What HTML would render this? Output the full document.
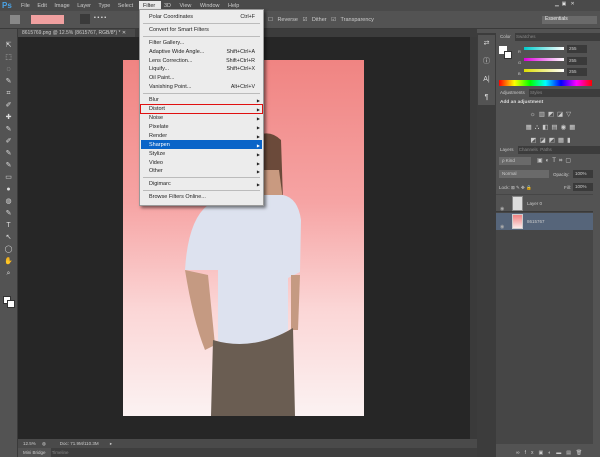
<!DOCTYPE html>
<html><head><style>
*{margin:0;padding:0;box-sizing:border-box}
body{width:600px;height:457px;background:#535353;position:relative;overflow:hidden;font-family:"Liberation Sans",sans-serif;font-size:5.5px;color:#ccc}
.a{position:absolute}
.mi{position:absolute;left:9px;color:#222;font-size:5.5px}
.sc{position:absolute;right:8px;color:#222;font-size:5.3px}
.ar{position:absolute;right:3px;color:#222;font-size:4px}
.sep{position:absolute;left:3px;right:3px;height:1px;background:#bbb}
</style></head><body>
<!-- menu bar -->
<div class="a" style="left:0;top:0;width:600px;height:11px;background:#4a4a4a"></div>
<div class="a" style="left:2px;top:1px;color:#4aa3e6;font-weight:bold;font-size:8px">Ps</div>
<div class="a" style="left:21px;top:3px;word-spacing:6px;color:#ccc">File Edit Image Layer Type Select</div>
<div class="a" style="left:139px;top:1px;width:22px;height:10px;background:#e8e8e8"></div>
<div class="a" style="left:143px;top:3px;color:#222">Filter</div>
<div class="a" style="left:164px;top:3px;word-spacing:7px">3D View Window Help</div>
<div class="a" style="left:555px;top:1px;width:40px;height:7px;color:#ddd;font-size:5px">▁ &nbsp;▣ &nbsp; ✕</div>
<!-- options bar -->
<div class="a" style="left:0;top:11px;width:600px;height:18px;background:#535353;border-bottom:1px solid #3a3a3a"></div>
<div class="a" style="left:10px;top:15px;width:10px;height:9px;background:#888"></div>
<div class="a" style="left:31px;top:15px;width:33px;height:9px;background:#f0a0a0"></div>
<div class="a" style="left:80px;top:14px;width:10px;height:10px;background:#3a3a3a"></div>
<div class="a" style="left:94px;top:15px;width:40px;height:8px;color:#ddd">▪ ▪ ▪ ▪</div>
<div class="a" style="left:268px;top:17px;word-spacing:3px">☐ Reverse ☑ Dither ☑ Transparency</div>
<div class="a" style="left:542px;top:16px;width:55px;height:8px;background:#6a6a6a;color:#eee;padding-left:3px;font-size:5px">Essentials</div>
<!-- tab bar -->
<div class="a" style="left:18px;top:29px;width:459px;height:8px;background:#3c3c3c"></div>
<div class="a" style="left:18px;top:29px;width:117px;height:8px;background:#4a4a4a;padding-left:4px;font-size:5px;line-height:8px">8615769.png @ 12.5% (8615767, RGB/8*) * ✕</div>
<!-- left toolbar -->
<div class="a" style="left:0;top:29px;width:18px;height:428px;background:#535353;border-right:1px solid #3a3a3a"></div>
<div class="a" style="left:3px;top:40px;width:11px;color:#ddd;font-size:7px;line-height:12px;text-align:center">⇱<br>⬚<br>◌<br>✎<br>⌗<br>✐<br>✚<br>✎<br>✐<br>✎<br>✎<br>▭<br>●<br>◍<br>✎<br>T<br>↖<br>◯<br>✋<br>⌕</div>
<div class="a" style="left:3px;top:296px;width:8px;height:8px;background:#fff;border:1px solid #333"></div>
<div class="a" style="left:7px;top:300px;width:8px;height:8px;background:#fff;border:1px solid #333"></div>
<!-- canvas area -->
<div class="a" style="left:18px;top:37px;width:452px;height:402px;background:#262626"></div>
<div class="a" style="left:470px;top:37px;width:7px;height:402px;background:#3a3a3a"></div>
<div class="a" style="left:123px;top:60px;width:241px;height:356px;background:linear-gradient(#f08482,#f6a4a4 40%,#fbd6d6 70%,#fbf2f2)"></div>
<svg class="a" style="left:123px;top:60px" width="241" height="356">
<path d="M135 75 Q148 70 158 80 L160 140 L137 140 Z" fill="#6b4a3a"/>
<path d="M128 110 L156 110 L160 140 L128 140Z" fill="#c99a80"/>
<path d="M85 145 Q100 132 125 135 L160 135 Q175 138 178 160 L177 212 L165 218 L165 270 Q140 290 95 282 L95 210 L62 210 Q65 160 85 145Z" fill="#dde2ef"/>
<path d="M62 210 L85 215 L92 285 L82 290 Q70 260 62 210Z" fill="#c59a82"/>
<path d="M168 215 L177 215 L175 270 L168 270Z" fill="#c59a82"/>
<path d="M90 280 Q130 292 170 268 L172 356 L88 356 Z" fill="#6a5d52"/>
</svg>
<!-- status bar -->
<div class="a" style="left:18px;top:439px;width:459px;height:9px;background:#4a4a4a;font-size:4.5px;line-height:9px;padding-left:5px">12.5% &nbsp; &nbsp; ◍ &nbsp; &nbsp; &nbsp; &nbsp; &nbsp; Doc: 71.9M/110.3M &nbsp; &nbsp; &nbsp; &nbsp; ▸</div>
<div class="a" style="left:18px;top:448px;width:459px;height:9px;background:#3e3e3e;font-size:4.5px;line-height:9px"><span style="background:#535353;padding:0 5px;display:inline-block">Mini Bridge</span> <span style="color:#888">Timeline</span></div>
<!-- dock -->
<div class="a" style="left:477px;top:33px;width:19px;height:424px;background:#3c3c3c"></div>
<div class="a" style="left:478px;top:35px;width:17px;height:70px;background:#535353;color:#ddd;font-size:7px;line-height:18px;text-align:center">⇄<br>ⓘ<br>A|<br>¶</div>
<!-- panels -->
<div class="a" style="left:496px;top:33px;width:104px;height:424px;background:#535353"></div>
<div class="a" style="left:496px;top:33px;width:104px;height:8px;background:#3c3c3c;font-size:4.5px;line-height:8px"><span style="background:#535353;padding:0 4px;display:inline-block">Color</span> <span style="color:#888">Swatches</span></div>
<div class="a" style="left:499px;top:46px;width:8px;height:8px;background:#fff"></div>
<div class="a" style="left:504px;top:51px;width:8px;height:8px;background:#fff;border:1px solid #333"></div>
<div class="a" style="left:518px;top:46px;font-size:4px;line-height:11px">R<br>G<br>B</div>
<div class="a" style="left:524px;top:47px;width:40px;height:3px;background:linear-gradient(90deg,#0cc,#fff)"></div>
<div class="a" style="left:524px;top:58px;width:40px;height:3px;background:linear-gradient(90deg,#d0d,#fff)"></div>
<div class="a" style="left:524px;top:69px;width:40px;height:3px;background:linear-gradient(90deg,#dd0,#fff)"></div>
<div class="a" style="left:567px;top:45px;width:20px;height:8px;background:#3a3a3a;font-size:4.5px;line-height:8px;padding-left:2px">255</div>
<div class="a" style="left:567px;top:57px;width:20px;height:8px;background:#3a3a3a;font-size:4.5px;line-height:8px;padding-left:2px">255</div>
<div class="a" style="left:567px;top:68px;width:20px;height:8px;background:#3a3a3a;font-size:4.5px;line-height:8px;padding-left:2px">255</div>
<div class="a" style="left:499px;top:80px;width:93px;height:6px;background:linear-gradient(90deg,#f00,#ff0,#0f0,#0ff,#00f,#f0f,#f00)"></div>
<div class="a" style="left:496px;top:89px;width:104px;height:8px;background:#3c3c3c;font-size:4.5px;line-height:8px"><span style="background:#535353;padding:0 4px;display:inline-block">Adjustments</span> <span style="color:#888">Styles</span></div>
<div class="a" style="left:500px;top:100px;font-size:4.8px;font-weight:bold;color:#ddd">Add an adjustment</div>
<div class="a" style="left:512px;top:108px;width:80px;color:#ccc;font-size:6.5px;line-height:13px;letter-spacing:3px;text-align:center">☼▥◩◪▽<br>▦⛬◧▤◉▦<br>◩◪◩▦▮</div>
<div class="a" style="left:496px;top:146px;width:104px;height:8px;background:#3c3c3c;font-size:4.5px;line-height:8px"><span style="background:#535353;padding:0 4px;display:inline-block">Layers</span> <span style="color:#888">Channels &nbsp;Paths</span></div>
<div class="a" style="left:499px;top:157px;width:32px;height:8px;background:#6a6a6a;font-size:4.5px;line-height:8px;padding-left:3px">ρ Kind</div>
<div class="a" style="left:537px;top:157px;font-size:6px;letter-spacing:3px;color:#ccc">▣◐T⌗▢</div>
<div class="a" style="left:499px;top:170px;width:50px;height:8px;background:#6a6a6a;font-size:4.5px;line-height:8px;padding-left:3px">Normal</div>
<div class="a" style="left:553px;top:172px;font-size:4.5px">Opacity:</div>
<div class="a" style="left:573px;top:170px;width:20px;height:8px;background:#3a3a3a;font-size:4.5px;line-height:8px;padding-left:2px">100%</div>
<div class="a" style="left:499px;top:185px;font-size:4.5px">Lock: ⊠ ✎ ✥ 🔒</div>
<div class="a" style="left:564px;top:185px;font-size:4.5px">Fill:</div>
<div class="a" style="left:573px;top:183px;width:20px;height:8px;background:#3a3a3a;font-size:4.5px;line-height:8px;padding-left:2px">100%</div>
<div class="a" style="left:496px;top:194px;width:97px;height:250px;background:#464646"></div>
<div class="a" style="left:496px;top:195px;width:97px;height:17px;background:#535353;border-bottom:1px solid #3a3a3a"></div>
<div class="a" style="left:512px;top:196px;width:11px;height:15px;background:#ddd;border:1px solid #888"></div>
<div class="a" style="left:527px;top:201px;font-size:4.5px">Layer 0</div>
<div class="a" style="left:496px;top:213px;width:97px;height:17px;background:#56657a"></div>
<div class="a" style="left:512px;top:214px;width:11px;height:15px;background:linear-gradient(#f08080,#fbeaea);border:1px solid #ccc"></div>
<div class="a" style="left:527px;top:219px;font-size:4.5px">8615767</div>
<div class="a" style="left:500px;top:200px;font-size:5px;color:#aaa;line-height:18px">◉<br>◉</div>
<div class="a" style="left:496px;top:450px;width:104px;height:7px;background:#535353;font-size:5px;color:#ccc;letter-spacing:5px;padding-left:20px">∞fx▣◐▬▤🗑</div>
<!-- Filter menu -->
<div class="a" style="left:139px;top:9px;width:125px;height:197px;background:#ececec;border:1px solid #999;box-shadow:2px 2px 3px rgba(0,0,0,.5)">
<div class="mi" style="top:4px">Polar Coordinates</div><div class="sc" style="top:4px">Ctrl+F</div>
<div class="sep" style="top:13px"></div>
<div class="mi" style="top:17px">Convert for Smart Filters</div>
<div class="sep" style="top:26px"></div>
<div class="mi" style="top:30px">Filter Gallery...</div>
<div class="mi" style="top:39px">Adaptive Wide Angle...</div><div class="sc" style="top:39px">Shift+Ctrl+A</div>
<div class="mi" style="top:48px">Lens Correction...</div><div class="sc" style="top:48px">Shift+Ctrl+R</div>
<div class="mi" style="top:56px">Liquify...</div><div class="sc" style="top:56px">Shift+Ctrl+X</div>
<div class="mi" style="top:65px">Oil Paint...</div>
<div class="mi" style="top:74px">Vanishing Point...</div><div class="sc" style="top:74px">Alt+Ctrl+V</div>
<div class="sep" style="top:83px"></div>
<div class="mi" style="top:87px">Blur</div><div class="ar" style="top:88px">▶</div>
<div class="a" style="left:0;top:94px;width:123px;height:10px;border:1px solid #e01010"></div>
<div class="mi" style="top:96px">Distort</div><div class="ar" style="top:97px">▶</div>
<div class="mi" style="top:105px">Noise</div><div class="ar" style="top:106px">▶</div>
<div class="mi" style="top:114px">Pixelate</div><div class="ar" style="top:115px">▶</div>
<div class="mi" style="top:123px">Render</div><div class="ar" style="top:124px">▶</div>
<div class="a" style="left:1px;top:130px;width:121px;height:9px;background:#0a64c8"></div>
<div class="mi" style="top:132px;color:#fff">Sharpen</div><div class="ar" style="top:133px;color:#fff">▶</div>
<div class="mi" style="top:141px">Stylize</div><div class="ar" style="top:142px">▶</div>
<div class="mi" style="top:150px">Video</div><div class="ar" style="top:151px">▶</div>
<div class="mi" style="top:158px">Other</div><div class="ar" style="top:159px">▶</div>
<div class="sep" style="top:167px"></div>
<div class="mi" style="top:171px">Digimarc</div><div class="ar" style="top:172px">▶</div>
<div class="sep" style="top:180px"></div>
<div class="mi" style="top:184px">Browse Filters Online...</div>
</div>
</body></html>
